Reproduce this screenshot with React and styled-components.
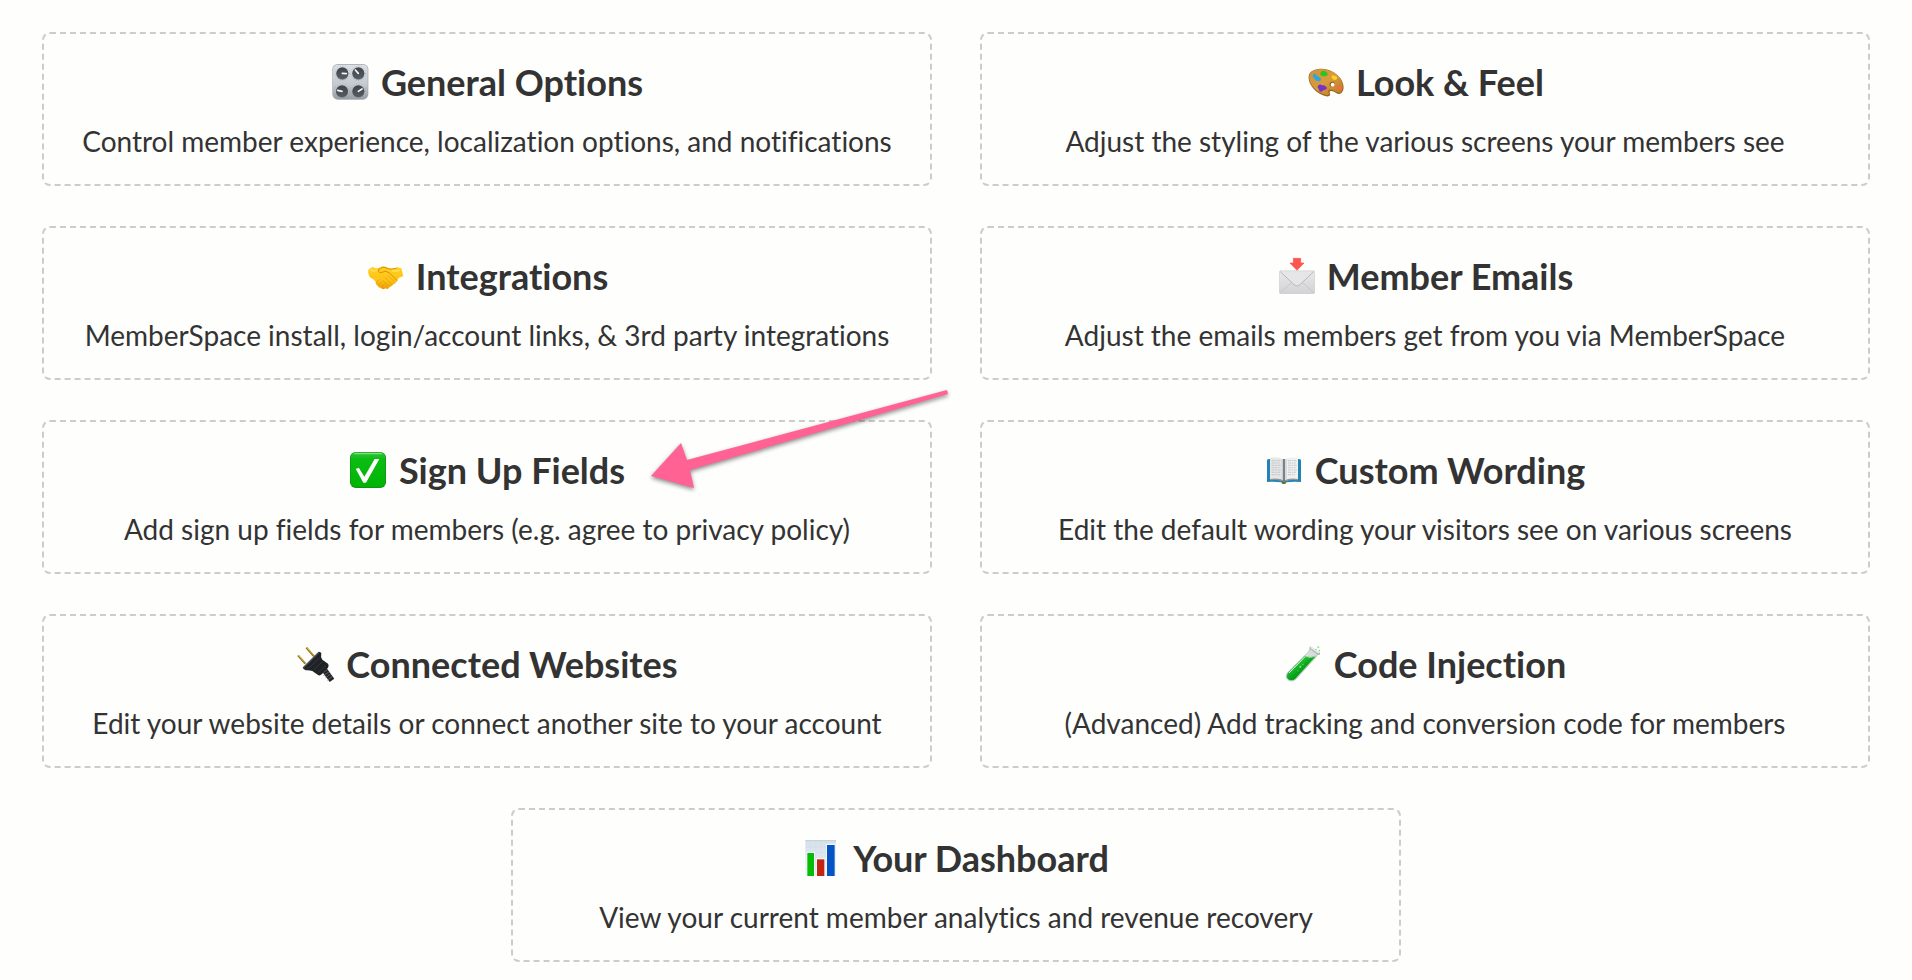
import styled, { createGlobalStyle } from 'styled-components';

const KnobsIcon = () => (
  <Icon viewBox='0 0 120 120' aria-hidden='true'>
    <defs>
      <linearGradient id='knobPlate' x1='0' y1='0' x2='0' y2='1'>
        <stop offset='0' stopColor='#dde1e5' />
        <stop offset='0.6' stopColor='#c3c9ce' />
        <stop offset='1' stopColor='#989fa8' />
      </linearGradient>
      <linearGradient id='knobFace' x1='0' y1='0' x2='0' y2='1'>
        <stop offset='0' stopColor='#3f444a' />
        <stop offset='1' stopColor='#565c63' />
      </linearGradient>
    </defs>
    <rect x='4' y='6' width='108' height='107' rx='16' fill='#a2a8af' />
    <rect x='6' y='8' width='104' height='102' rx='14' fill='url(#knobPlate)' />
    {[
      [34, 34, 12, 1],
      [82, 34, -9, -10],
      [33, 88, -13, -3],
      [82, 88, 11, -7],
    ].map(([x, y, dx, dy]) => (
      <g key={`${x}-${y}`}>
        <circle
          cx={x}
          cy={y}
          r='22'
          fill='none'
          stroke='#8d959c'
          strokeWidth='2'
          strokeDasharray='2 6'
        />
        <circle cx={x} cy={y + 2} r='18' fill='#8c939b' />
        <circle cx={x} cy={y} r='18' fill='url(#knobFace)' />
        <path
          d={`M${x} ${y}l${dx} ${dy}`}
          stroke='#f4f5f6'
          strokeWidth='5'
          strokeLinecap='round'
        />
      </g>
    ))}
  </Icon>
);

const PaletteIcon = () => (
  <Icon viewBox='0 0 120 120' aria-hidden='true'>
    <defs>
      <linearGradient id='wood' x1='0' y1='0' x2='1' y2='1'>
        <stop offset='0' stopColor='#cf9340' />
        <stop offset='0.5' stopColor='#d99b3c' />
        <stop offset='1' stopColor='#b87925' />
      </linearGradient>
    </defs>
    <path
      d='M8 42C10 26 28 20 47 20C68 20 91 32 103 49C112 61 116 79 110 88C106 97 97 98 89 92C82 87 72 84 71 90C71 96 75 98 70 102C61 106 45 99 34 91C19 79 6 61 8 42Z'
      fill='#9b6721'
    />
    <path
      d='M10 41C13 27 29 21 47 21C67 21 89 32 101 48C110 60 113 77 108 86C104 93 97 94 90 89C81 83 69 79 67 87C66 94 72 96 67 98C59 101 46 95 36 88C21 77 8 59 10 41Z'
      fill='url(#wood)'
    />
    <circle cx='79' cy='67' r='8' fill='#8c5b1c' />
    <circle cx='80' cy='68' r='6' fill='#fefefd' />
    <path d='M45 31c2-5 12-5 16-1 4 3 7 9 1 11-5 2-16 3-16-1-5-2-4-6-1-9z' fill='#2cc51e' />
    <path d='M22 36c6-2 7 3 13 7 6 3 12 6 9 12-5 6-15 2-17-3-5-3-8-12-5-16z' fill='#25a9df' />
    <path d='M38 69c3-4 7 0 12 1 5-1 12 4 13 9-3 6-9 3-13 8-5 5-14-1-11-6-6-3-5-8-1-12z' fill='#7832c8' />
    <path d='M78 42c4-3 12 0 15 4 2 4-2 8-6 8-7-1-13-8-9-12z' fill='#fbd12d' />
    <path d='M92 70c5-1 13 3 16 8 2 4-2 7-6 4-5 0-12-9-10-12z' fill='#ff6450' />
  </Icon>
);

const HandshakeIcon = () => (
  <Icon viewBox='0 0 120 120' aria-hidden='true'>
    <defs>
      <linearGradient id='hand' x1='0' y1='0' x2='0' y2='1'>
        <stop offset='0' stopColor='#ffcf28' />
        <stop offset='0.6' stopColor='#ffc414' />
        <stop offset='1' stopColor='#e99a05' />
      </linearGradient>
    </defs>
    <path
      d='M7 41L20 32Q30 40 43 34Q54 27 67 36Q80 39 95 34L106 37L112 61Q104 63 97 67Q95 78 83 85Q77 91 70 94Q66 102 58 97Q50 104 45 95Q36 96 36 89Q28 86 29 77Q23 68 13 65Q5 55 7 41Z'
      fill='url(#hand)'
    />
    <path
      d='M38 40Q51 29 66 38Q76 42 90 37M39 41Q34 50 44 50Q55 47 59 45Q71 49 83 63L92 73'
      fill='none'
      stroke='#d99108'
      strokeWidth='3'
      strokeLinecap='round'
    />
    <path
      d='M67 60L84 76M59 66L75 83M51 73L65 88M31 79L40 71M37 88L47 77M46 95L54 85'
      fill='none'
      stroke='#dd980c'
      strokeWidth='2'
      strokeLinecap='round'
    />
    <path d='M14 42Q24 47 33 43M78 44Q90 47 101 43' fill='none' stroke='#ffdf56' strokeWidth='5' />
  </Icon>
);

const EnvelopeIcon = () => (
  <Icon viewBox='0 0 120 120' aria-hidden='true'>
    <defs>
      <linearGradient id='paper' x1='0' y1='0' x2='0' y2='1'>
        <stop offset='0' stopColor='#e9e9ea' />
        <stop offset='1' stopColor='#d3d3d5' />
      </linearGradient>
    </defs>
    <rect x='7' y='44' width='106' height='69' rx='3' fill='#c2c2c5' />
    <rect x='8' y='45' width='104' height='66' rx='3' fill='url(#paper)' />
    <path d='M10 109L47 77M110 109L73 77' stroke='#bfc0c2' strokeWidth='2' />
    <path
      d='M9 46L51 86Q60 95 69 86L111 46'
      fill='#e6e6e7'
      stroke='#b6b9bc'
      strokeWidth='3'
      strokeLinejoin='round'
    />
    <path d='M9 45H111' stroke='#d5d5d6' strokeWidth='2' />
    <path
      d='M49 7H71V21H81L60 43L39 21H49Z'
      fill='#fb5550'
      stroke='#fb5550'
      strokeWidth='2'
      strokeLinejoin='round'
    />
  </Icon>
);

const CheckIcon = () => (
  <Icon viewBox='0 0 120 120' aria-hidden='true'>
    <defs>
      <linearGradient id='green' x1='0' y1='0' x2='0' y2='1'>
        <stop offset='0' stopColor='#35c33b' />
        <stop offset='0.2' stopColor='#0bbd12' />
        <stop offset='1' stopColor='#00b404' />
      </linearGradient>
    </defs>
    <rect x='3' y='6' width='108' height='108' rx='17' fill='#148f19' />
    <rect x='5' y='7' width='104' height='104' rx='16' fill='url(#green)' />
    <path d='M17 11H97' stroke='#7ddc80' strokeWidth='4' strokeLinecap='round' />
    <path d='M20 56L30 54L46 80L77 27H91L51 98H43Z' fill='#fff' />
  </Icon>
);

const BookIcon = () => (
  <Icon viewBox='0 0 120 120' aria-hidden='true'>
    <path d='M6 29L12 27H102L108 29V96Q83 94 64 97L60 102H52L49 97Q27 94 6 96Z' fill='#2482b4' />
    <path d='M50 93H65L61 101H53Z' fill='#6b722d' />
    <path d='M15 23Q40 18 57 29V94Q38 85 15 90Z' fill='#e6e6e6' />
    <path d='M99 23Q74 18 57 29V94Q76 85 99 90Z' fill='#f0f0f0' />
    <path d='M15 89Q40 85 57 93Q74 85 99 89' fill='none' stroke='#8d949d' strokeWidth='4' />
    <path d='M57 28V93' stroke='#656d77' strokeWidth='5' />
    <path d='M52 27V90M63 27V90' stroke='#cbd0d4' strokeWidth='4' />
    <path
      d='M20 32H46M20 39H44M20 46H47M20 53H43M20 60H47M20 67H45M20 74H46M69 32H94M69 39H92M69 46H95M69 53H91M69 60H95M69 67H93M69 74H90'
      stroke='#b6b8bc'
      strokeWidth='2'
      strokeDasharray='9 2 5 2'
    />
  </Icon>
);

const PlugIcon = () => (
  <Icon viewBox='0 0 120 120' aria-hidden='true'>
    <path d='M6 34L28 59M31 11L54 37' stroke='#8c6b16' strokeWidth='6' />
    <path d='M6 33L28 57M31 10L54 35' stroke='#e1b83d' strokeWidth='3' />
    <path d='M83 75L108 109' stroke='#242629' strokeWidth='17' />
    <path
      d='M78 88L95 76M82 95L100 83M88 102L104 90M94 109L108 98'
      stroke='#777a7d'
      strokeWidth='2'
    />
    <path
      d='M20 71Q22 75 29 79Q40 78 49 81L65 92Q71 97 77 91L96 71Q100 64 96 59L79 47Q73 39 76 28Q74 23 69 23Z'
      fill='#202326'
    />
    <path d='M22 71L69 25' stroke='#4b5055' strokeWidth='4' />
    <path d='M31 75Q44 70 72 40M52 79L80 52' fill='none' stroke='#34383c' strokeWidth='3' />
    <path d='M64 87L91 63' stroke='#303438' strokeWidth='3' />
  </Icon>
);

const TubeIcon = () => (
  <Icon viewBox='0 0 120 120' aria-hidden='true'>
    <defs>
      <linearGradient id='liquid' x1='0' y1='0' x2='1' y2='1'>
        <stop offset='0.25' stopColor='#43c54e' />
        <stop offset='0.5' stopColor='#07a918' />
        <stop offset='0.8' stopColor='#087c19' />
      </linearGradient>
    </defs>
    <path
      d='M79 13L101 29L97 38L35 106Q24 116 12 107Q2 99 10 87L75 22Z'
      fill='#d6dddb'
      stroke='#a2aead'
      strokeWidth='2'
    />
    <path d='M62 36Q80 44 95 37L34 104Q23 113 12 105Q5 98 12 86Z' fill='url(#liquid)' />
    <path d='M76 25L15 87' stroke='#dcefe0' strokeWidth='3' />
    <path d='M63 37Q80 44 94 36' fill='none' stroke='#8bd795' strokeWidth='3' />
    <path d='M80 12L104 29' stroke='#aab5b4' strokeWidth='8' strokeLinecap='round' />
    <path d='M81 11L103 26' stroke='#e8eeed' strokeWidth='4' strokeLinecap='round' />
    <circle cx='49' cy='68' r='3' fill='#8ae48e' />
    <circle cx='57' cy='61' r='2' fill='#74dd7d' />
    <circle cx='42' cy='80' r='2' fill='#51cf5e' />
    <circle cx='103' cy='10' r='3' fill='#7fe48a' />
    <circle cx='106' cy='20' r='2' fill='#2fd047' />
    <circle cx='96' cy='16' r='2' fill='#55d768' />
  </Icon>
);

const ChartIcon = () => (
  <Icon viewBox='0 0 120 120' aria-hidden='true'>
    <defs>
      <linearGradient id='sheet' x1='0' y1='0' x2='0' y2='1'>
        <stop offset='0' stopColor='#d5e0ea' />
        <stop offset='1' stopColor='#edf2f6' />
      </linearGradient>
    </defs>
    <rect x='7' y='6' width='92' height='108' fill='url(#sheet)' />
    <path d='M7 8H99' stroke='#c8d0d7' strokeWidth='3' />
    <path
      d='M22 10V113M38 10V113M54 10V113M70 10V113M8 27H98M8 44H98M8 61H98'
      stroke='#cbd9e6'
      strokeWidth='1'
    />
    <path d='M10 42H36V114H10ZM39 60H67V114H39ZM69 17H98V114H69Z' fill='#f5f7f9' />
    <rect x='13' y='45' width='20' height='69' fill='#05bd05' />
    <rect x='42' y='64' width='22' height='50' fill='#c42414' />
    <rect x='72' y='21' width='23' height='93' fill='#0554c5' />
  </Icon>
);

const settings = [
  {
    title: 'General Options',
    text: 'Control member experience, localization options, and notifications',
    href: '#general',
    icon: KnobsIcon,
  },
  {
    title: 'Look & Feel',
    text: 'Adjust the styling of the various screens your members see',
    href: '#look',
    icon: PaletteIcon,
  },
  {
    title: 'Integrations',
    text: 'MemberSpace install, login/account links, & 3rd party integrations',
    href: '#integrations',
    icon: HandshakeIcon,
  },
  {
    title: 'Member Emails',
    text: 'Adjust the emails members get from you via MemberSpace',
    href: '#emails',
    icon: EnvelopeIcon,
  },
  {
    title: 'Sign Up Fields',
    text: 'Add sign up fields for members (e.g. agree to privacy policy)',
    href: '#fields',
    icon: CheckIcon,
    pointed: true,
  },
  {
    title: 'Custom Wording',
    text: 'Edit the default wording your visitors see on various screens',
    href: '#wording',
    icon: BookIcon,
  },
  {
    title: 'Connected Websites',
    text: 'Edit your website details or connect another site to your account',
    href: '#websites',
    icon: PlugIcon,
  },
  {
    title: 'Code Injection',
    text: '(Advanced) Add tracking and conversion code for members',
    href: '#code',
    icon: TubeIcon,
  },
  {
    title: 'Your Dashboard',
    text: 'View your current member analytics and revenue recovery',
    href: '#dashboard',
    icon: ChartIcon,
  },
];

const App = () => (
  <>
    <GlobalStyle />
    <Main>
      {settings.map(({ title, text, href, icon: CardIcon, pointed }) => (
        <Card key={href} href={href}>
          <Title>
            <CardIcon />
            {title}
          </Title>
          <Description>{text}</Description>
          {pointed && (
            <Arrow viewBox='0 0 304 108' aria-hidden='true'>
              <path d='M3 90L33 57L39 74L299 4L300 8L42 84L46 102Z' />
            </Arrow>
          )}
        </Card>
      ))}
    </Main>
  </>
);

export default App;

const GlobalStyle = createGlobalStyle`
  * {
    box-sizing: border-box;
  }

  body {
    margin: 0;
    background: #fefefd;
    color: #333;
    font-family: Lato, 'Liberation Sans', sans-serif;
    font-variant-ligatures: no-common-ligatures;
  }
`;

const Main = styled.main`
  display: flex;
  flex-wrap: wrap;
  justify-content: center;
  gap: 40px 48px;
  padding: 32px 42px 18px;
`;

const Card = styled.a`
  position: relative;
  flex: 0 0 calc(50% - 24px);
  padding: 26px 16px 24px;
  border: 2px dashed #ccc;
  border-radius: 8px;
  color: inherit;
  text-align: center;
  text-decoration: none;

  @media (max-width: 1100px) {
    flex-basis: 100%;
  }
`;

const Title = styled.h2`
  display: flex;
  justify-content: center;
  align-items: center;
  gap: 10px;
  margin: 0 0 18px;
  font-size: 36px;
  font-weight: 700;
  line-height: 44px;
`;

const Icon = styled.svg`
  flex: none;
  width: 40px;
  height: 40px;
`;

const Description = styled.p`
  margin: 0;
  font-size: 28px;
  line-height: 38px;
`;

const Arrow = styled.svg`
  position: absolute;
  top: -36px;
  right: -22px;
  z-index: 1;
  width: 304px;
  height: 108px;
  fill: #ff6293;
  filter: drop-shadow(0 2px 2px rgba(0, 0, 0, 0.45));
  pointer-events: none;
`;
